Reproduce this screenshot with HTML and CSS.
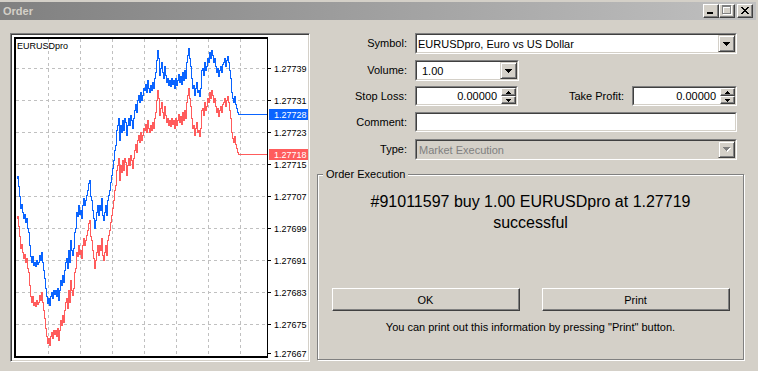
FILE: index.html
```html
<!DOCTYPE html>
<html>
<head>
<meta charset="utf-8">
<title>Order</title>
<link rel="stylesheet" href="styles.css">
</head>
<body>
<div class="window">
  <div class="titlebar">
    <span class="title">Order</span>
    <div class="caption">
      <span class="cbtn"><svg width="14" height="12" viewBox="0 0 14 12" shape-rendering="crispEdges"><rect x="3" y="7" width="6" height="2" fill="#000"/></svg></span>
      <span class="cbtn"><svg width="14" height="12" viewBox="0 0 14 12" shape-rendering="crispEdges"><g fill="#fff" transform="translate(1,1)"><rect x="2" y="0" width="9" height="2"/><rect x="2" y="0" width="1" height="9"/><rect x="10" y="0" width="1" height="9"/><rect x="2" y="8" width="9" height="1"/></g><g fill="#808080"><rect x="2" y="0" width="9" height="2"/><rect x="2" y="0" width="1" height="9"/><rect x="10" y="0" width="1" height="9"/><rect x="2" y="8" width="9" height="1"/></g></svg></span>
      <span class="cbtn close"><svg width="14" height="12" viewBox="0 0 14 12" shape-rendering="crispEdges"><path transform="translate(3,2)" fill="#000" d="M0 0h2v1h-2z M6 0h2v1h-2z M1 1h2v1h-2z M5 1h2v1h-2z M2 2h4v1h-4z M3 3h2v1h-2z M2 4h4v1h-4z M1 5h2v1h-2z M5 5h2v1h-2z M0 6h2v1h-2z M6 6h2v1h-2z"/></svg></span>
    </div>
  </div>
  <div class="content">
    <div class="chart">
      <svg width="296" height="325" viewBox="12 35 296 325">
        <defs>
          <path id="px" fill="none" d="M16 178 H17V176 H18V186 H19V196 H20V208 H21V204 H22V212 H23V218 H24V214 H25V222 H26V218 H27V228 H28V232 H29V245 H30V256 H31V262 H32V256 H33V265 H34V262 H35V266 H36V260 H37V264 H38V262 H39V255 H40V260 H41V252 H42V262 H43V270 H44V278 H45V288 H46V296 H47V303 H48V298 H49V305 H50V296 H51V292 H52V298 H53V290 H54V294 H55V290 H56V296 H57V288 H58V300 H59V290 H60V280 H61V285 H62V275 H63V282 H64V270 H65V262 H66V258 H67V268 H68V250 H69V262 H70V240 H71V250 H72V255 H73V248 H74V232 H75V228 H76V212 H77V216 H78V205 H79V214 H80V210 H81V218 H82V205 H83V198 H84V205 H85V200 H86V195 H87V190 H88V183 H89V180 H90V196 H91V200 H92V210 H93V218 H94V228 H95V220 H96V212 H97V205 H98V215 H99V205 H100V210 H101V198 H102V215 H103V220 H104V212 H105V205 H106V215 H107V200 H108V195 H109V190 H110V182 H111V175 H112V168 H113V160 H114V150 H115V145 H116V130 H117V125 H118V118 H119V140 H120V125 H121V132 H122V120 H123V130 H124V118 H125V122 H126V135 H127V125 H128V118 H129V125 H130V115 H131V120 H132V128 H133V118 H134V110 H135V104 H136V112 H137V100 H138V95 H139V102 H140V92 H141V100 H142V95 H143V88 H144V90 H145V84 H146V92 H147V80 H148V88 H149V92 H150V85 H151V90 H152V82 H153V88 H154V78 H155V72 H156V60 H157V50 H158V58 H159V75 H160V68 H161V62 H162V72 H163V78 H164V66 H165V75 H166V82 H167V78 H168V85 H169V80 H170V86 H171V78 H172V84 H173V80 H174V88 H175V78 H176V85 H177V80 H178V74 H179V82 H180V76 H181V84 H182V72 H183V80 H184V70 H185V78 H186V62 H187V55 H188V48 H189V58 H190V66 H191V78 H192V88 H193V85 H194V95 H195V88 H196V82 H197V92 H198V90 H199V96 H200V88 H201V70 H202V68 H203V75 H204V62 H205V70 H206V66 H207V58 H208V62 H209V52 H210V58 H211V50 H212V55 H213V62 H214V58 H215V66 H216V72 H217V68 H218V76 H219V70 H220V66 H221V72 H222V64 H223V62 H224V58 H225V66 H226V60 H227V56 H228V62 H229V70 H230V78 H231V92 H232V98 H233V102 H234V96 H235V104 H236V108 H237V112 H238V114 H267"/>
        </defs>
        <g stroke="#c0c0c0" stroke-width="1" stroke-dasharray="3 3" shape-rendering="crispEdges">
          <line x1="48.5" y1="39" x2="48.5" y2="356"/>
          <line x1="80.5" y1="39" x2="80.5" y2="356"/>
          <line x1="112.5" y1="39" x2="112.5" y2="356"/>
          <line x1="144.5" y1="39" x2="144.5" y2="356"/>
          <line x1="176.5" y1="39" x2="176.5" y2="356"/>
          <line x1="208.5" y1="39" x2="208.5" y2="356"/>
          <line x1="240.5" y1="39" x2="240.5" y2="356"/>
          <line x1="16" y1="68.5" x2="267" y2="68.5"/>
          <line x1="16" y1="100.5" x2="267" y2="100.5"/>
          <line x1="16" y1="132.5" x2="267" y2="132.5"/>
          <line x1="16" y1="164.5" x2="267" y2="164.5"/>
          <line x1="16" y1="196.5" x2="267" y2="196.5"/>
          <line x1="16" y1="228.5" x2="267" y2="228.5"/>
          <line x1="16" y1="260.5" x2="267" y2="260.5"/>
          <line x1="16" y1="292.5" x2="267" y2="292.5"/>
          <line x1="16" y1="324.5" x2="267" y2="324.5"/>
        </g>
        <g transform="translate(0.5,0.5)" stroke-width="1" shape-rendering="crispEdges">
          <use href="#px" stroke="#ff5c5c" transform="translate(0,40)"/>
          <use href="#px" stroke="#0a64ff"/>
        </g>
        <g fill="#000" shape-rendering="crispEdges">
          <rect x="14" y="37" width="2" height="321"/>
          <rect x="14" y="37" width="254" height="2"/>
          <rect x="267" y="37" width="1" height="321"/>
          <rect x="14" y="356" width="254" height="2"/>
          <rect x="268" y="68" width="3" height="1"/>
          <rect x="268" y="100" width="3" height="1"/>
          <rect x="268" y="132" width="3" height="1"/>
          <rect x="268" y="164" width="3" height="1"/>
          <rect x="268" y="196" width="3" height="1"/>
          <rect x="268" y="228" width="3" height="1"/>
          <rect x="268" y="260" width="3" height="1"/>
          <rect x="268" y="292" width="3" height="1"/>
          <rect x="268" y="324" width="3" height="1"/>
          <rect x="268" y="353" width="3" height="1"/>
        </g>
        <g class="axis" font-size="9" fill="#000">
          <text x="17" y="49">EURUSDpro</text>
          <text x="274" y="72">1.27739</text>
          <text x="274" y="104">1.27731</text>
          <text x="274" y="136">1.27723</text>
          <text x="274" y="168">1.27715</text>
          <text x="274" y="200">1.27707</text>
          <text x="274" y="232">1.27699</text>
          <text x="274" y="264">1.27691</text>
          <text x="274" y="296">1.27683</text>
          <text x="274" y="328">1.27675</text>
          <text x="274" y="357">1.27667</text>
        </g>
        <rect x="269" y="109" width="40" height="11" fill="#0a64ff"/>
        <rect x="269" y="149" width="40" height="11" fill="#ff5c5c"/>
        <g class="axis" font-size="9" fill="#fff">
          <text x="274" y="118">1.27728</text>
          <text x="274" y="158">1.27718</text>
        </g>
      </svg>
    </div>
    <div class="panel">
      <div class="form">
        <div class="lbl">Symbol:</div>
        <div class="field"><div class="fi"><span class="val p1">EURUSDpro, Euro vs US Dollar</span><span class="dd"><svg width="7" height="4" viewBox="0 0 7 4" shape-rendering="crispEdges"><path fill="#000" d="M0 0h7v1h-7z M1 1h5v1h-5z M2 2h3v1h-3z M3 3h1v1h-1z"/></svg></span></div></div>

        <div class="lbl">Volume:</div>
        <div class="field vol"><div class="fi"><span class="val p5">1.00</span><span class="dd"><svg width="7" height="4" viewBox="0 0 7 4" shape-rendering="crispEdges"><path fill="#000" d="M0 0h7v1h-7z M1 1h5v1h-5z M2 2h3v1h-3z M3 3h1v1h-1z"/></svg></span></div></div>

        <div class="lbl h20">Stop Loss:</div>
        <div class="pair">
          <div class="field h20 sl"><div class="fi"><span class="val num">0.00000</span><span class="spin"><span class="sbtn"><svg width="5" height="3" viewBox="0 0 5 3" shape-rendering="crispEdges"><path fill="#000" d="M2 0h1v1h-1z M1 1h3v1h-3z M0 2h5v1h-5z"/></svg></span><span class="sbtn"><svg width="5" height="3" viewBox="0 0 5 3" shape-rendering="crispEdges"><path fill="#000" d="M0 0h5v1h-5z M1 1h3v1h-3z M2 2h1v1h-1z"/></svg></span></span></div></div>
          <div class="lbl2">Take Profit:</div>
          <div class="field h20 tp"><div class="fi"><span class="val num">0.00000</span><span class="spin"><span class="sbtn"><svg width="5" height="3" viewBox="0 0 5 3" shape-rendering="crispEdges"><path fill="#000" d="M2 0h1v1h-1z M1 1h3v1h-3z M0 2h5v1h-5z"/></svg></span><span class="sbtn"><svg width="5" height="3" viewBox="0 0 5 3" shape-rendering="crispEdges"><path fill="#000" d="M0 0h5v1h-5z M1 1h3v1h-3z M2 2h1v1h-1z"/></svg></span></span></div></div>
        </div>

        <div class="lbl h20">Comment:</div>
        <div class="field h20"><div class="fi"></div></div>

        <div class="lbl">Type:</div>
        <div class="field disabled"><div class="fi"><span class="val p2">Market Execution</span><span class="dd"><svg width="8" height="5" viewBox="0 0 8 5" shape-rendering="crispEdges"><path fill="#fff" transform="translate(1,1)" d="M0 0h7v1h-7z M1 1h5v1h-5z M2 2h3v1h-3z M3 3h1v1h-1z"/><path fill="#808080" d="M0 0h7v1h-7z M1 1h5v1h-5z M2 2h3v1h-3z M3 3h1v1h-1z"/></svg></span></div></div>
      </div>

      <fieldset class="group">
        <legend>Order Execution</legend>
        <div class="result">#91011597 buy 1.00 EURUSDpro at 1.27719<br>successful</div>
        <div class="buttons">
          <button class="btn">OK</button>
          <button class="btn">Print</button>
        </div>
        <div class="note">You can print out this information by pressing "Print" button.</div>
      </fieldset>
    </div>
  </div>
</div>
</body>
</html>
```

FILE: styles.css
```css
* { box-sizing: border-box; }
html, body { margin: 0; padding: 0; }
body {
  background: #d4d0c8;
  font-family: "Liberation Sans", Arial, sans-serif;
  font-size: 11px;
  color: #000;
}
.window {
  width: 758px;
  height: 371px;
  padding-top: 2px;
  overflow: hidden;
}
.titlebar {
  width: 756px;
  height: 18px;
  background: linear-gradient(to right, #808080, #c0c0c0);
  display: flex;
  align-items: center;
  justify-content: space-between;
  padding: 0 3px 0 3px;
}
.title {
  color: #d4d0c8;
  font-weight: bold;
  font-size: 11px;
  line-height: 18px;
}
.caption { display: flex; }
.cbtn {
  width: 16px;
  height: 14px;
  background: #d4d0c8;
  border: 1px solid;
  border-color: #fff #404040 #404040 #fff;
  box-shadow: inset -1px -1px 0 #808080;
}
.cbtn svg { display: block; }
.cbtn.close { margin-left: 2px; }

.content {
  display: flex;
  padding: 13px 0 0 10px;
}
.chart {
  width: 300px;
  height: 329px;
  padding: 1px;
  border: 1px solid;
  border-color: #808080 #fff #fff #808080;
  box-shadow: inset 1px 1px 0 #404040, inset -1px -1px 0 #d4d0c8;
  background: #fff;
}
.chart svg { display: block; }
.axis { font-family: "Liberation Sans", Arial, sans-serif; }

.panel { width: 448px; }
.form {
  display: grid;
  grid-template-columns: 97px 322px;
  column-gap: 8px;
  grid-template-rows: 27px 26px 26px 27px 21px;
  align-items: start;
}
.lbl {
  text-align: right;
  line-height: 21px;
  white-space: nowrap;
}
.lbl.h20 { line-height: 20px; }
.field {
  height: 21px;
  border: 1px solid;
  border-color: #808080 #fff #fff #808080;
}
.field.h20 { height: 20px; }
.fi {
  height: 100%;
  border: 1px solid;
  border-color: #404040 #d4d0c8 #d4d0c8 #404040;
  background: #fff;
  display: flex;
  align-items: stretch;
}
.val {
  flex: 1;
  display: flex;
  align-items: center;
  white-space: nowrap;
  overflow: hidden;
}
.val.p1 { padding-left: 1px; }
.val.p2 { padding-left: 2px; }
.val.p5 { padding-left: 5px; }
.val.num { justify-content: flex-end; padding-right: 4px; }
.dd {
  width: 17px;
  background: #d4d0c8;
  border: 1px solid;
  border-color: #d4d0c8 #404040 #404040 #d4d0c8;
  box-shadow: inset 1px 1px 0 #fff, inset -1px -1px 0 #808080;
  display: flex;
  align-items: center;
  justify-content: center;
}
.dd svg { display: block; }
.disabled .fi { background: #d4d0c8; }
.disabled .val { color: #808080; }
.vol { width: 104px; }
.sl { width: 103px; }
.tp { width: 105px; }
.pair {
  display: flex;
  align-items: center;
  height: 20px;
}
.lbl2 {
  margin-left: auto;
  margin-right: 8px;
  white-space: nowrap;
}
.spin {
  width: 15px;
  display: flex;
  flex-direction: column;
}
.sbtn {
  flex: 1;
  background: #d4d0c8;
  border: 1px solid;
  border-color: #fff #404040 #404040 #fff;
  box-shadow: inset -1px -1px 0 #808080;
  display: flex;
  align-items: center;
  justify-content: center;
}
.sbtn svg { display: block; }

.group {
  margin: 8px 0 0 7px;
  width: 427px;
  height: 192px;
  border: 1px solid #808080;
  box-shadow: inset 1px 1px 0 #fff, 1px 1px 0 #fff;
  padding: 0;
  min-width: 0;
}
.group legend {
  margin-left: 5px;
  padding: 0 3px;
  line-height: 13px;
  font-size: 11px;
  background: #d4d0c8;
}
.result {
  margin-top: 10px;
  font-size: 16px;
  line-height: 21px;
  text-align: center;
}
.buttons {
  display: flex;
  justify-content: center;
  gap: 22px;
  margin-top: 55px;
}
.btn {
  width: 188px;
  height: 23px;
  background: #d4d0c8;
  border: 1px solid;
  border-color: #fff #404040 #404040 #fff;
  box-shadow: inset -1px -1px 0 #808080;
  font-family: "Liberation Sans", Arial, sans-serif;
  font-size: 11px;
  color: #000;
  padding: 0;
}
.note {
  text-align: center;
  margin-top: 10px;
  line-height: 13px;
}
```
